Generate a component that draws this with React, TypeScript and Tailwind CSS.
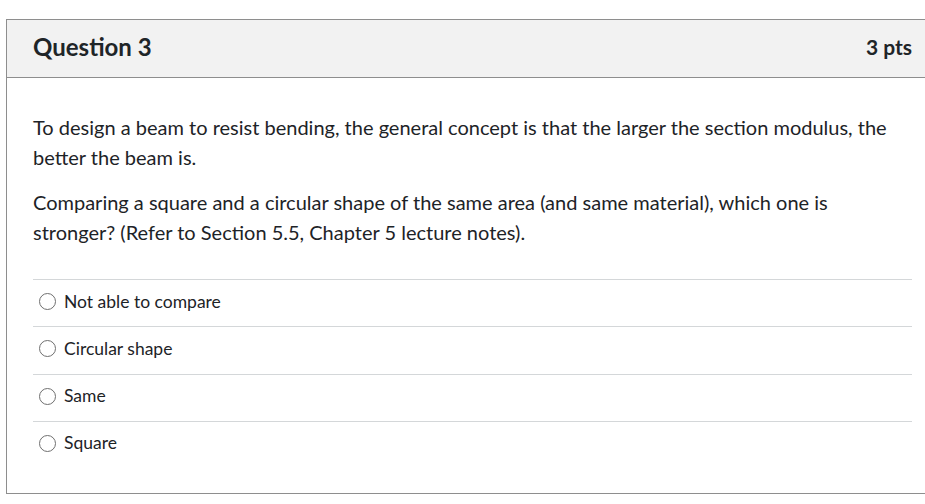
const answers = ["Not able to compare", "Circular shape", "Same", "Square"];

export default function App() {
  return (
    <div
      className="w-[925px] h-[504px] overflow-hidden bg-white pt-[19px] pl-[6px] text-[#2d3b45]"
      style={{ fontFamily: "Lato, 'Liberation Sans', sans-serif" }}
    >
      <div className="w-[933px] border border-[#8e8e8e] bg-white">
        <div className="h-[58px] bg-[#f2f2f2] border-b border-[#8e8e8e] flex items-center justify-between px-[26px] pb-[4px]">
          <h2 className="text-[24px] font-bold text-[#1f2528]">Question 3</h2>
          <span className="text-[21px] font-bold text-[#1f2528]">3 pts</span>
        </div>

        <div className="px-[26px] pt-[34px] pb-[25px]">
          <div className="text-[20px] leading-[30px] text-[#1d2327] w-[879px]">
            <p className="mb-[15px]">
              To design a beam to resist bending, the general concept is that the larger the section modulus, the better the beam is.
            </p>
            <p>
              Comparing a square and a circular shape of the same area (and same material), which one is stronger? (Refer to Section 5.5, Chapter 5 lecture notes).
            </p>
          </div>

          <div className="mt-[32px] w-[879px]">
            {answers.map((a) => (
              <label
                key={a}
                className="h-[47.25px] border-t border-[#d4d7d9] flex items-center pl-[6px] pb-[3px] gap-[8px] text-[17.5px] text-[#1d2327]"
              >
                <span className="w-[17px] h-[17px] rounded-full border border-[#6f6f6f] bg-white shrink-0" />
                <span>{a}</span>
              </label>
            ))}
          </div>
        </div>
      </div>
    </div>
  );
}
